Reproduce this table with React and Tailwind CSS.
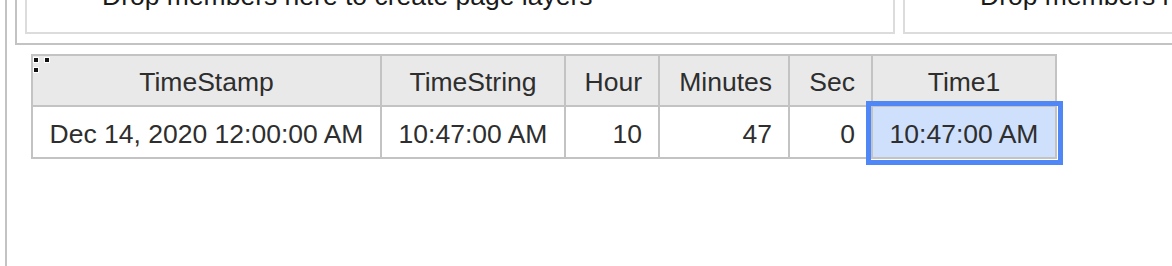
const columns = [
  { key: "ts", label: "TimeStamp", width: "w-[349px]", align: "justify-center" },
  { key: "tstr", label: "TimeString", width: "w-[184px]", align: "justify-center" },
  { key: "hour", label: "Hour", width: "w-[94px]", align: "justify-end pr-4" },
  { key: "min", label: "Minutes", width: "w-[130px]", align: "justify-end pr-4" },
  { key: "sec", label: "Sec", width: "w-[83px]", align: "justify-end pr-4" },
  { key: "t1", label: "Time1", width: "w-[184px]", align: "justify-center" },
];

const row = {
  ts: "Dec 14, 2020 12:00:00 AM",
  tstr: "10:47:00 AM",
  hour: "10",
  min: "47",
  sec: "0",
  t1: "10:47:00 AM",
};

function DropZone({ className }) {
  return (
    <div
      className={`h-[62px] shrink-0 border-2 border-[#dcdcdc] flex items-end pb-[21px] ${className}`}
    >
      <svg width="10" height="10" viewBox="0 0 10 10" className="ml-[34px] mb-[8px] shrink-0">
        <path d="M2 0 L8 0 L5 3 Z" fill="#8fb4f2" />
      </svg>
      <span className="ml-[31px] whitespace-nowrap text-[26.5px] leading-[30px] text-[#1a1a1a]">
        Drop members here to create page layers
      </span>
    </div>
  );
}

export default function App() {
  return (
    <div
      className="w-[1172px] h-[266px] overflow-hidden bg-white pl-[5px]"
      style={{ fontFamily: '"Liberation Sans", Arial, sans-serif' }}
    >
      <div className="h-full border-l-2 border-[#c3c3c3]">
        {/* page layer area */}
        <div className="ml-[8px] h-[45px] border-l-2 border-b-2 border-[#c3c3c3] overflow-hidden flex items-end gap-[8px] pl-[8px] pb-[9px]">
          <DropZone className="w-[870px]" />
          <DropZone className="w-[400px]" />
        </div>

        {/* crosstab */}
        <div className="relative ml-[24px] mt-[9px] w-[1026px] text-[26.5px] text-[#2e2e2e]">
          <div className="flex border-2 border-[#c3c3c3] border-r-0 bg-[#e9e9e9]">
            {columns.map((c) => (
              <div
                key={c.key}
                className={`${c.width} h-[49px] border-r-2 border-[#c3c3c3] flex items-center pt-[5px] ${c.align}`}
              >
                {c.label}
              </div>
            ))}
          </div>
          <div className="flex border-2 border-t-0 border-r-0 border-[#c3c3c3] bg-white">
            {columns.map((c) => (
              <div
                key={c.key}
                className={`${c.width} h-[50px] border-r-2 border-[#c3c3c3] flex items-center pt-[5px] ${c.align} ${
                  c.key === "t1" ? "bg-[#cfe0fc]" : ""
                }`}
              >
                {row[c.key]}
              </div>
            ))}
          </div>

          {/* corner handle */}
          <div className="absolute left-[2px] top-[3px] w-[6px] h-[6px] bg-white p-px">
            <div className="w-[4px] h-[4px] bg-[#111]" />
          </div>
          <div className="absolute left-[13px] top-[3px] w-[6px] h-[6px] bg-white p-px">
            <div className="w-[4px] h-[4px] bg-[#111]" />
          </div>
          <div className="absolute left-[2px] top-[13px] w-[6px] h-[6px] bg-white p-px">
            <div className="w-[4px] h-[4px] bg-[#111]" />
          </div>

          {/* selected cell */}
          <div className="absolute left-[835px] top-[47px] w-[197px] h-[64px] border-[5px] border-[#4f87f6] pointer-events-none" />
        </div>
      </div>
    </div>
  );
}
